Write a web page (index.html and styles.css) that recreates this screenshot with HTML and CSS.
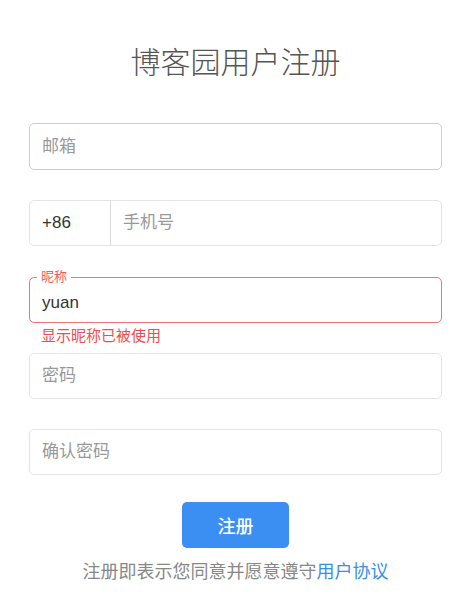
FILE: index.html
```html
<!DOCTYPE html>
<html lang="zh-CN">
<head>
<meta charset="utf-8">
<title>博客园用户注册</title>
<link rel="stylesheet" href="styles.css">
</head>
<body>
<div class="page">
  <h1 class="title">博客园用户注册</h1>
  <form class="form">
    <div class="field field-email">
      <input class="input" type="text" placeholder="邮箱">
    </div>
    <div class="field field-phone">
      <div class="prefix">+86</div>
      <input class="input" type="text" placeholder="手机号">
    </div>
    <fieldset class="field-error">
      <legend class="error-label">昵称</legend>
      <input class="input input-value" type="text" value="yuan">
    </fieldset>
    <div class="error-msg">显示昵称已被使用</div>
    <div class="field field-pwd">
      <input class="input" type="password" placeholder="密码">
    </div>
    <div class="field field-confirm">
      <input class="input" type="password" placeholder="确认密码">
    </div>
    <div class="actions">
      <button type="button" class="btn">注册</button>
    </div>
    <p class="agree">注册即表示您同意并愿意遵守<a class="link" href="#">用户协议</a></p>
  </form>
</div>
</body>
</html>
```
FILE: styles.css
```css
* { box-sizing: border-box; }
html, body { margin: 0; padding: 0; background: #fff; }
body {
  font-family: "Liberation Sans", "Noto Sans CJK SC", sans-serif;
  color: #333;
}
.page {
  width: 413px;
  margin-left: 29px;
  padding-top: 43px;
}
.title {
  margin: 0;
  font-size: 30px;
  line-height: 40px;
  font-weight: 300;
  color: #555;
  text-align: center;
}
.form { margin-top: 40px; }
.field {
  display: flex;
  height: 46px;
  border: 1px solid #e4e4e4;
  border-radius: 5px;
  background: #fff;
}
.field-email { height: 47px; border-color: #cdcdcd; margin-bottom: 30px; }
.field-phone { margin-bottom: 24px; }
.field-pwd { margin-bottom: 30px; }
.field-confirm { margin-bottom: 27px; }
.prefix {
  width: 81px;
  flex: none;
  border-right: 1px solid #dcdcdc;
  padding-left: 12px;
  display: flex;
  align-items: center;
  font-size: 17px;
  color: #333;
}
.input {
  flex: 1;
  min-width: 0;
  width: 100%;
  border: 0;
  outline: none;
  background: transparent;
  padding: 0 12px;
  font-family: "Liberation Sans", "Noto Sans CJK SC", sans-serif;
  font-size: 17px;
  color: #333;
}
.input::placeholder { color: #999; }
.field-error {
  margin: 0;
  padding: 0 12px 0 12px;
  border: 1px solid #f27373;
  border-radius: 5px;
}
.error-label {
  margin-left: -5px;
  padding: 0 4px;
  font-size: 13px;
  line-height: 14px;
  color: #f05a5a;
}
.input-value {
  display: block;
  height: 38px;
  padding: 0;
  font-size: 17px;
  color: #333;
}
.error-msg {
  padding-left: 12px;
  padding-bottom: 4px;
  font-size: 15px;
  line-height: 26px;
  color: #f04c4c;
}
.actions { display: flex; justify-content: center; }
.btn {
  width: 107px;
  height: 46px;
  border: 0;
  border-radius: 5px;
  background: #3b8ff2;
  color: #fff;
  font-family: "Noto Sans CJK SC", sans-serif;
  font-size: 18px;
  font-weight: 500;
}
.agree {
  margin: 12px 0 0;
  text-align: center;
  font-size: 18px;
  line-height: 24px;
  color: #888;
}
.link { color: #3a8ee6; text-decoration: none; }
```
